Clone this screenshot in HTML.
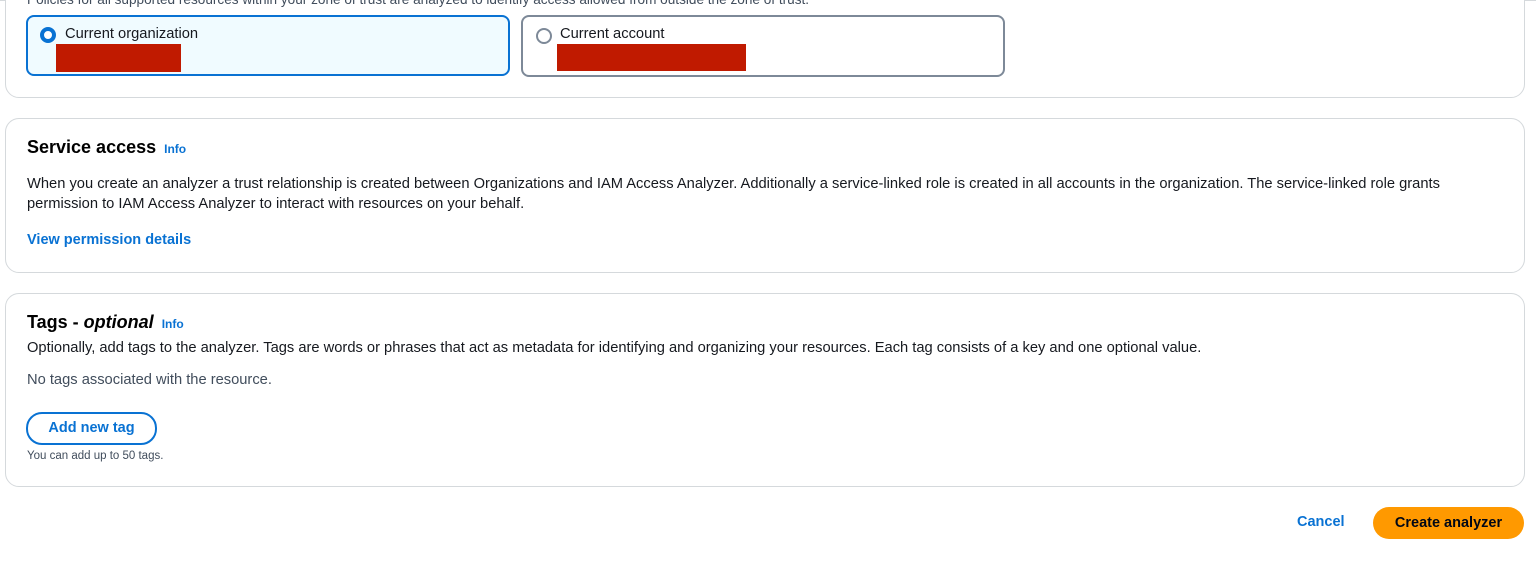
<!DOCTYPE html>
<html><head><style>
body{margin:0;width:1536px;height:562px;background:#fff;font-family:"Liberation Sans",sans-serif;color:#16191f;position:relative;overflow:hidden}
.card{position:absolute;left:5px;width:1518px;border:1px solid #d5d9dc;border-radius:14px;background:#fff}
.a{position:absolute}
.h{font-size:18px;font-weight:bold;color:#000}
.info{font-size:12px;font-weight:bold;color:#0972d3}
.t{font-size:14.7px;color:#16191f}
.red{position:absolute;background:#c01a00}
</style></head><body>
<div style="position:absolute;left:0;top:0;width:1536px;height:1px;background:#d5d9dc"></div>
<div class="card" style="top:-20px;height:116px"></div>
<div class="a t" style="left:27px;top:-8px;color:#414d5c;font-size:13.6px">Policies for all supported resources within your zone of trust are analyzed to identify access allowed from outside the zone of trust.</div>
<div class="a" style="left:26px;top:15px;width:480px;height:57px;border:2px solid #0972d3;border-radius:8px;background:#f0fbff"></div>
<div class="a" style="left:40px;top:27px;width:8px;height:8px;border:4px solid #0972d3;border-radius:50%;background:#fff"></div>
<div class="a t" style="left:65px;top:26px">Current organization</div>
<div class="red" style="left:56px;top:44px;width:125px;height:28px"></div>
<div class="a" style="left:521px;top:15px;width:480px;height:58px;border:2px solid #7d8998;border-radius:8px"></div>
<div class="a" style="left:536px;top:28px;width:12px;height:12px;border:2px solid #7d8998;border-radius:50%"></div>
<div class="a t" style="left:560px;top:26px">Current account</div>
<div class="red" style="left:557px;top:44px;width:189px;height:27px"></div>

<div class="card" style="top:118px;height:153px"></div>
<div class="a h" style="left:27px;top:137px">Service access <span class="info" style="margin-left:3px">Info</span></div>
<div class="a t" style="left:27px;top:174px;width:1450px;line-height:20px">When you create an analyzer a trust relationship is created between Organizations and IAM Access Analyzer. Additionally a service-linked role is created in all accounts in the organization. The service-linked role grants permission to IAM Access Analyzer to interact with resources on your behalf.</div>
<div class="a" style="left:27px;top:232px;font-size:14.5px;font-weight:bold;color:#0972d3">View permission details</div>

<div class="card" style="top:293px;height:192px"></div>
<div class="a h" style="left:27px;top:312px">Tags - <i>optional</i> <span class="info" style="margin-left:3px">Info</span></div>
<div class="a t" style="left:27px;top:340px">Optionally, add tags to the analyzer. Tags are words or phrases that act as metadata for identifying and organizing your resources. Each tag consists of a key and one optional value.</div>
<div class="a t" style="left:27px;top:372px;color:#414d5c">No tags associated with the resource.</div>
<div class="a" style="left:26px;top:412px;width:127px;height:29px;border:2px solid #0972d3;border-radius:16px;text-align:center;line-height:29px;font-size:14.5px;font-weight:bold;color:#0972d3">Add new tag</div>
<div class="a" style="left:27px;top:450px;font-size:11.5px;color:#414d5c">You can add up to 50 tags.</div>

<div class="a" style="left:1297px;top:514px;font-size:14.5px;font-weight:bold;color:#0972d3">Cancel</div>
<div class="a" style="left:1373px;top:507px;width:151px;height:32px;border-radius:16px;background:#ff9900;text-align:center;line-height:32px;font-size:14.5px;font-weight:bold;color:#000716">Create analyzer</div>
</body></html>
